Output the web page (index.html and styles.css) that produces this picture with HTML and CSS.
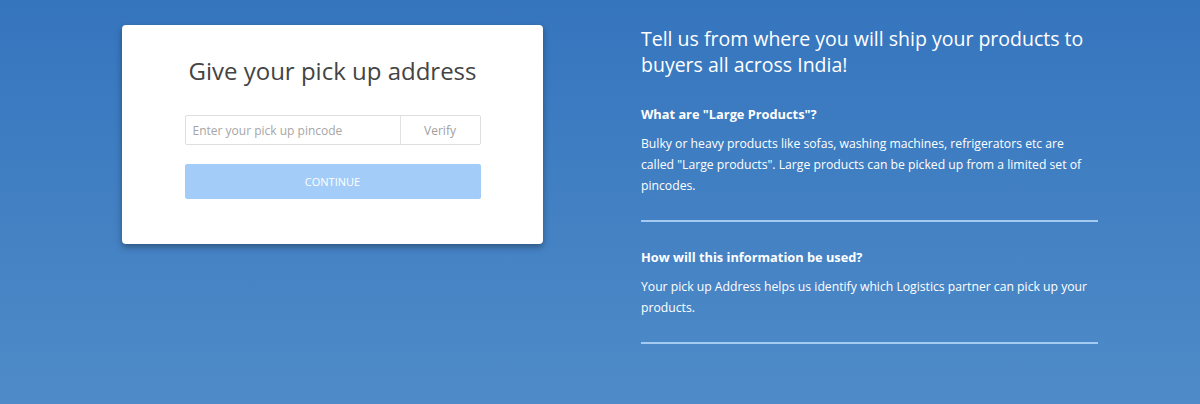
FILE: index.html
```html
<!DOCTYPE html>
<html lang="en">
<head>
<meta charset="utf-8">
<title>Pick up address</title>
<link rel="stylesheet" href="styles.css">
</head>
<body>
<main class="page">
  <section class="card">
    <h1 class="card-title">Give your pick up address</h1>
    <div class="pin-group">
      <input class="pin-input" type="text" placeholder="Enter your pick up pincode">
      <button class="verify" type="button">Verify</button>
    </div>
    <button class="continue" type="button">CONTINUE</button>
  </section>
  <aside class="info">
    <h2 class="info-title">Tell us from where you will ship your products to buyers all across India!</h2>
    <div class="faq first">
      <h3 class="faq-q">What are "Large Products"?</h3>
      <p class="faq-a">Bulky or heavy products like sofas, washing machines, refrigerators etc are called "Large products". Large products can be picked up from a limited set of pincodes.</p>
    </div>
    <div class="faq">
      <h3 class="faq-q">How will this information be used?</h3>
      <p class="faq-a">Your pick up Address helps us identify which Logistics partner can pick up your products.</p>
    </div>
  </aside>
</main>
</body>
</html>
```
FILE: styles.css
```css
html, body {
  margin: 0;
  height: 100%;
}
body {
  background: linear-gradient(180deg, #3575be 0%, #4f8bc8 100%);
  font-family: "Open Sans", "Noto Sans", sans-serif;
  overflow: hidden;
}
.page {
  display: flex;
  align-items: flex-start;
  gap: 98px;
  padding: 25px 0 0 122px;
}
.card {
  width: 421px;
  box-sizing: border-box;
  background: #fff;
  border-radius: 4px;
  box-shadow: 0 3px 7px rgba(0, 0, 0, 0.35);
  padding: 31px 0 45px;
  display: flex;
  flex-direction: column;
  align-items: center;
}
.card-title {
  margin: 0;
  font-size: 24px;
  line-height: 30px;
  font-weight: 400;
  color: #444;
}
.pin-group {
  margin-top: 29px;
  width: 296px;
  height: 30px;
  box-sizing: border-box;
  border: 1px solid #dedede;
  border-radius: 2px;
  display: flex;
}
.pin-input {
  flex: 1;
  min-width: 0;
  border: 0;
  outline: 0;
  padding: 0 0 0 7px;
  font-family: inherit;
  font-size: 12px;
  color: #555;
  background: transparent;
}
.pin-input::placeholder {
  color: #a6a6a6;
}
.verify {
  width: 80px;
  border: 0;
  border-left: 1px solid #e2e2e2;
  background: #fff;
  font-family: inherit;
  font-size: 12px;
  color: #a0a0a0;
  padding: 0;
}
.continue {
  margin-top: 19px;
  width: 296px;
  height: 35px;
  border: 0;
  border-radius: 2px;
  background: #a3cdf8;
  color: #fff;
  font-family: inherit;
  font-size: 11px;
  padding: 0;
}
.info {
  width: 457px;
  padding-top: 1px;
  color: #fff;
}
.info-title {
  margin: 0;
  font-size: 19.5px;
  line-height: 26px;
  font-weight: 400;
}
.faq {
  border-bottom: 2px solid #a3cbf2;
  padding-bottom: 24px;
  margin-top: 25px;
}
.faq.first {
  margin-top: 26px;
}
.faq-q {
  margin: 0;
  font-size: 12.8px;
  line-height: 20px;
  font-weight: 700;
}
.faq-a {
  margin: 9px 0 0;
  font-size: 12.2px;
  line-height: 21px;
}
```
